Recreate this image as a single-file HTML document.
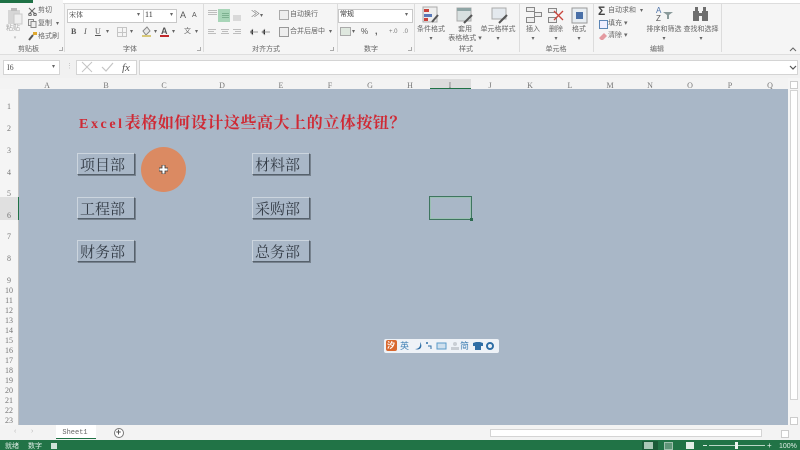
<!DOCTYPE html>
<html lang="zh-CN"><head><meta charset="utf-8">
<style>
html,body{margin:0;padding:0;background:#fff}
#p{position:relative;width:800px;height:450px;overflow:hidden;background:#f4f4f4;font-family:"Liberation Sans","Noto Sans CJK SC",sans-serif;filter:blur(.35px)}
#p div,#p span.a{position:absolute}
.t{font-size:7px;color:#666;white-space:nowrap;line-height:10px}
.c{transform:translateX(-50%);text-align:center}
.h{font-family:"Liberation Serif","Noto Serif CJK SC",serif;font-size:8px;color:#777;line-height:10px;transform:translateX(-50%);white-space:nowrap}
.r{font-family:"Liberation Serif",serif;font-size:8px;color:#777;width:16px;text-align:center;line-height:10px;left:1px}
.b{background:#a9b7c7;border:1px solid;border-color:#ccd5de #56616c #56616c #ccd5de;box-shadow:1px 1px 0 #77828e;font-family:"Noto Serif CJK SC",serif;font-size:15px;line-height:22px;color:#333b45;text-align:left;padding-left:2px;box-sizing:border-box;width:58px;height:22px;white-space:nowrap}
.sep{width:1px;background:#dcdcdc;top:4px;height:48px}
</style></head><body><div id="p">
<!-- ribbon -->
<div style="left:0;top:0;width:800px;height:54px;background:#f5f5f5;border-bottom:1px solid #dedede"></div>
<div style="left:0;top:0;width:33px;height:3px;background:#1e7145"></div>
<div style="left:63px;top:0;width:737px;height:3px;background:#fff;border-bottom:1px solid #ddd"></div>

<!-- clipboard -->
<svg style="position:absolute;left:6px;top:7px" width="18" height="18"><rect x="2" y="3" width="12" height="14" fill="#d6d6d6"/><rect x="5" y="1" width="6" height="3" fill="#bdbdbd"/><rect x="8" y="7" width="8" height="10" fill="#efefef" stroke="#cacaca"/></svg>
<div class="t c" style="left:13px;top:24px;color:#aaa">粘贴</div>
<div class="t c" style="left:15px;top:33px;font-size:5px;color:#bbb">▾</div>
<svg style="position:absolute;left:28px;top:7px" width="9" height="9"><path d="M1 1L7 7M7 1L1 7" stroke="#666" stroke-width="1"/><circle cx="2" cy="7.5" r="1.3" fill="none" stroke="#666"/><circle cx="7" cy="7.5" r="1.3" fill="none" stroke="#666"/></svg>
<div class="t" style="left:38px;top:6px">剪切</div>
<svg style="position:absolute;left:28px;top:19px" width="9" height="9"><rect x="0.5" y="0.5" width="5" height="6" fill="#eee" stroke="#888"/><rect x="3" y="2.5" width="5" height="6" fill="#eee" stroke="#888"/></svg>
<div class="t" style="left:38px;top:19px">复制</div>
<div class="t" style="left:56px;top:19px;font-size:6px">▾</div>
<svg style="position:absolute;left:28px;top:32px" width="9" height="9"><path d="M1 8L5 3" stroke="#555" stroke-width="2"/><rect x="5" y="0" width="4" height="3" fill="#e0a92e"/></svg>
<div class="t" style="left:38px;top:32px">格式刷</div>
<div class="t" style="left:18px;top:45px;font-size:7px">剪贴板</div>

<!-- font -->
<div style="left:67px;top:9px;width:75px;height:12px;background:#fff;border:1px solid #c8c8c8"></div>
<div class="t" style="left:69px;top:10px;color:#333;font-family:'Noto Serif CJK SC',serif">宋体</div>
<div class="t" style="left:137px;top:10px;font-size:6px">▾</div>
<div style="left:143px;top:9px;width:32px;height:12px;background:#fff;border:1px solid #c8c8c8"></div>
<div class="t" style="left:145px;top:10px;color:#333;font-family:'Liberation Serif',serif;font-size:8px">11</div>
<div class="t" style="left:170px;top:10px;font-size:6px">▾</div>
<div class="t" style="left:180px;top:10px;font-size:9px;color:#555">A</div>
<div class="t" style="left:192px;top:11px;font-size:7px;color:#555">A</div>
<div class="t" style="left:71px;top:27px;font-weight:bold;color:#555;font-family:'Liberation Serif',serif;font-size:8px">B</div>
<div class="t" style="left:84px;top:27px;font-style:italic;color:#555;font-family:'Liberation Serif',serif;font-size:8px">I</div>
<div class="t" style="left:95px;top:27px;text-decoration:underline;color:#555;font-family:'Liberation Serif',serif;font-size:8px">U</div>
<div class="t" style="left:106px;top:27px;font-size:6px">▾</div>
<div style="left:117px;top:27px;width:8px;height:8px;border:1px solid #c5c5c5;background:linear-gradient(#c5c5c5,#c5c5c5) 4px 0/1px 8px no-repeat,linear-gradient(#c5c5c5,#c5c5c5) 0 4px/8px 1px no-repeat"></div>
<div class="t" style="left:130px;top:27px;font-size:6px">▾</div>
<svg style="position:absolute;left:141px;top:26px" width="11" height="11"><path d="M2 5L6 1L9 5L5 9Z" fill="#e8e8e8" stroke="#888"/><rect x="1" y="9" width="9" height="2" fill="#d8c878"/></svg>
<div class="t" style="left:154px;top:27px;font-size:6px">▾</div>
<div class="t" style="left:161px;top:26px;font-size:9px;color:#555;font-weight:bold">A</div>
<div style="left:160px;top:35px;width:9px;height:2px;background:#c0292b"></div>
<div class="t" style="left:172px;top:27px;font-size:6px">▾</div>
<div class="t" style="left:184px;top:27px;color:#666">文</div>
<div class="t" style="left:195px;top:27px;font-size:6px">▾</div>
<div class="t" style="left:123px;top:45px">字体</div>
<div class="sep" style="left:64px"></div><div class="sep" style="left:203px"></div><div class="sep" style="left:337px"></div><div class="sep" style="left:414px"></div><div class="sep" style="left:519px"></div><div class="sep" style="left:593px"></div><div class="sep" style="left:721px"></div>
<div style="left:59px;top:47px;width:3px;height:3px;border-right:1px solid #aaa;border-bottom:1px solid #aaa"></div>
<div style="left:197px;top:47px;width:3px;height:3px;border-right:1px solid #aaa;border-bottom:1px solid #aaa"></div>
<div style="left:330px;top:47px;width:3px;height:3px;border-right:1px solid #aaa;border-bottom:1px solid #aaa"></div>
<div style="left:408px;top:47px;width:3px;height:3px;border-right:1px solid #aaa;border-bottom:1px solid #aaa"></div>

<!-- alignment -->
<div style="left:218px;top:9px;width:12px;height:13px;background:#a8d5b8"></div>
<svg style="position:absolute;left:207px;top:9px" width="40" height="30" stroke="#aaa" stroke-width=".8"><path d="M1 1.5H10M1 3.5H10M1 5.5H10"/><path d="M15 4.5H22M15 6.5H22M15 8.5H22" stroke="#6fa583"/><path d="M26 7H34M26 9H34M26 11H34"/><path d="M1 20.5H9M1 22.5H7M1 24.5H9M14 20.5H22M15 22.5H21M14 24.5H22M26 20.5H34M28 22.5H34M26 24.5H34"/></svg>
<div class="t" style="left:251px;top:9px;font-size:9px;color:#777">≫</div>
<div class="t" style="left:260px;top:11px;font-size:6px">▾</div>
<svg style="position:absolute;left:250px;top:27px" width="22" height="10" stroke="#999"><path d="M0 5H8M3 2L0 5L3 8M12 5H20M15 2L12 5L15 8"/></svg>
<div style="left:279px;top:10px;width:8px;height:8px;border:1px solid #aaa;background:#eee"></div>
<div class="t" style="left:290px;top:10px">自动换行</div>
<div style="left:279px;top:27px;width:8px;height:8px;border:1px solid #999;background:#eee"></div>
<div class="t" style="left:290px;top:27px">合并后居中</div>
<div class="t" style="left:329px;top:27px;font-size:6px">▾</div>
<div class="t" style="left:252px;top:45px">对齐方式</div>

<!-- number -->
<div style="left:338px;top:9px;width:73px;height:12px;background:#fff;border:1px solid #c8c8c8"></div>
<div class="t" style="left:340px;top:10px;color:#333">常规</div>
<div class="t" style="left:405px;top:10px;font-size:6px">▾</div>
<div style="left:340px;top:27px;width:9px;height:7px;background:#dfe8df;border:1px solid #aaa"></div>
<div class="t" style="left:352px;top:27px;font-size:6px">▾</div>
<div class="t" style="left:361px;top:27px;font-size:8px;color:#555">%</div>
<div class="t" style="left:375px;top:26px;font-size:9px;color:#555;font-weight:bold">,</div>
<div class="t" style="left:389px;top:27px;font-size:6px;color:#777">+.0</div>
<div class="t" style="left:403px;top:27px;font-size:6px;color:#777">.0</div>
<div class="t" style="left:364px;top:45px">数字</div>

<!-- styles -->
<svg style="position:absolute;left:422px;top:6px" width="18" height="18"><rect x="1" y="1" width="14" height="15" fill="#eee" stroke="#aaa"/><rect x="2" y="3" width="5" height="3" fill="#c9423b"/><rect x="2" y="8" width="8" height="3" fill="#5a79b8"/><rect x="2" y="12" width="4" height="3" fill="#c9423b"/><path d="M10 16L16 9" stroke="#555" stroke-width="2"/></svg>
<svg style="position:absolute;left:456px;top:7px" width="18" height="18"><rect x="1" y="1" width="14" height="13" fill="#d8e0e0" stroke="#aaa"/><rect x="1" y="1" width="14" height="3" fill="#8fa5a5"/><path d="M8 16L16 8" stroke="#555" stroke-width="2"/></svg>
<svg style="position:absolute;left:491px;top:7px" width="18" height="18"><rect x="1" y="1" width="14" height="11" fill="#e4e9ee" stroke="#aaa"/><path d="M8 16L16 8" stroke="#555" stroke-width="2"/></svg>
<div class="t c" style="left:431px;top:25px">条件格式</div>
<div class="t c" style="left:431px;top:34px;font-size:6px">▾</div>
<div class="t c" style="left:465px;top:25px">套用</div>
<div class="t c" style="left:465px;top:34px">表格格式 ▾</div>
<div class="t c" style="left:498px;top:25px">单元格样式</div>
<div class="t c" style="left:498px;top:34px;font-size:6px">▾</div>
<div class="t c" style="left:466px;top:45px">样式</div>

<!-- cells -->
<svg style="position:absolute;left:526px;top:7px" width="16" height="17" fill="#eee" stroke="#888"><rect x=".5" y=".5" width="8" height="4"/><rect x="8.5" y="5.5" width="7" height="4"/><rect x=".5" y="10.5" width="8" height="5"/></svg>
<svg style="position:absolute;left:548px;top:7px" width="18" height="17"><rect x=".5" y="1.5" width="8" height="4" fill="#eee" stroke="#888"/><rect x=".5" y="10.5" width="8" height="5" fill="#eee" stroke="#888"/><path d="M6 4L15 13M15 4L6 13" stroke="#c9453c" stroke-width="1.3"/></svg>
<svg style="position:absolute;left:571px;top:6px" width="18" height="18"><rect x="1" y="2" width="15" height="15" fill="#e9eef2" stroke="#999"/><rect x="5" y="6" width="7" height="7" fill="#4a70a8"/></svg>
<div class="t c" style="left:533px;top:25px">插入</div><div class="t c" style="left:533px;top:34px;font-size:6px">▾</div>
<div class="t c" style="left:556px;top:25px">删除</div><div class="t c" style="left:556px;top:34px;font-size:6px">▾</div>
<div class="t c" style="left:579px;top:25px">格式</div><div class="t c" style="left:579px;top:34px;font-size:6px">▾</div>
<div class="t c" style="left:556px;top:45px">单元格</div>

<!-- editing -->
<div class="t" style="left:598px;top:5px;font-size:12px;color:#444;font-weight:bold;line-height:12px">Σ</div>
<div class="t" style="left:608px;top:6px">自动求和</div><div class="t" style="left:640px;top:6px;font-size:6px">▾</div>
<div style="left:599px;top:20px;width:7px;height:7px;border:1px solid #5b85b5;background:#eef"></div>
<div class="t" style="left:608px;top:19px">填充 ▾</div>
<svg style="position:absolute;left:598px;top:31px" width="10" height="10"><path d="M1 7L6 2L9 5L5 9H3Z" fill="#e49aa0"/></svg>
<div class="t" style="left:608px;top:31px">清除 ▾</div>
<div class="t" style="left:656px;top:7px;font-size:8px;color:#4a70a8;line-height:8px">A</div>
<div class="t" style="left:656px;top:15px;font-size:8px;color:#555;line-height:8px">Z</div>
<svg style="position:absolute;left:663px;top:11px" width="11" height="9"><path d="M0 1H10L6 4V8H4V4Z" fill="#8a9a9a"/></svg>
<svg style="position:absolute;left:692px;top:7px" width="17" height="15" fill="#6e6e6e"><rect x="1" y="4" width="6" height="10"/><rect x="10" y="4" width="6" height="10"/><rect x="3" y="0" width="3" height="5"/><rect x="11" y="0" width="3" height="5"/><rect x="7" y="6" width="3" height="3"/></svg>
<div class="t c" style="left:664px;top:25px">排序和筛选</div><div class="t c" style="left:664px;top:34px;font-size:6px">▾</div>
<div class="t c" style="left:701px;top:25px">查找和选择</div><div class="t c" style="left:701px;top:34px;font-size:6px">▾</div>
<div class="t c" style="left:657px;top:45px">编辑</div>
<svg style="position:absolute;left:789px;top:46px" width="8" height="6"><path d="M1 5L4 2L7 5" fill="none" stroke="#666"/></svg>

<!-- formula bar -->
<div style="left:0;top:55px;width:800px;height:34px;background:#f1f1f1"></div>
<div style="left:3px;top:60px;width:55px;height:13px;background:#fff;border:1px solid #d4d4d4"></div>
<div class="t" style="left:7px;top:63px;font-family:'Liberation Serif',serif;font-size:8px;color:#555">I6</div>
<div class="t" style="left:52px;top:62px;font-size:6px">▾</div>
<div class="t" style="left:66px;top:62px;color:#bbb">⋮</div>
<div style="left:76px;top:60px;width:59px;height:13px;background:#fff;border:1px solid #d4d4d4"></div>
<svg style="position:absolute;left:80px;top:61px" width="56" height="12"><path d="M2 1L12 11M12 1L2 11" stroke="#c4c4c4"/><path d="M22 6L26 10L33 2" fill="none" stroke="#c4c4c4" stroke-width="1.2"/><text x="42" y="10" font-family="Liberation Serif" font-style="italic" font-size="11" fill="#555">fx</text></svg>
<div style="left:139px;top:60px;width:657px;height:13px;background:#fff;border:1px solid #d4d4d4"></div>
<svg style="position:absolute;left:789px;top:65px" width="8" height="6"><path d="M1 1L4 4L7 1" fill="none" stroke="#555" stroke-width="1.2"/></svg>

<!-- headers -->
<div style="left:0;top:78px;width:800px;height:11px;background:#f3f3f3"></div>
<div style="left:0;top:89px;width:18px;height:336px;background:#f5f5f5;border-right:1px solid #c4c4c4"></div>
<div style="left:430px;top:79px;width:41px;height:10px;background:#dcdcdc;border-bottom:1px solid #207245;box-sizing:border-box"></div>
<div style="left:0;top:197px;width:18px;height:23px;background:#e0e0e0;border-right:1px solid #207245"></div>
<div class="h" style="left:47px;top:81px">A</div><div class="h" style="left:106px;top:81px">B</div><div class="h" style="left:164px;top:81px">C</div><div class="h" style="left:222px;top:81px">D</div><div class="h" style="left:281px;top:81px">E</div><div class="h" style="left:330px;top:81px">F</div><div class="h" style="left:370px;top:81px">G</div><div class="h" style="left:410px;top:81px">H</div><div class="h" style="left:450px;top:81px">I</div><div class="h" style="left:490px;top:81px">J</div><div class="h" style="left:530px;top:81px">K</div><div class="h" style="left:570px;top:81px">L</div><div class="h" style="left:610px;top:81px">M</div><div class="h" style="left:650px;top:81px">N</div><div class="h" style="left:690px;top:81px">O</div><div class="h" style="left:730px;top:81px">P</div><div class="h" style="left:770px;top:81px">Q</div>
<div class="r" style="top:102px">1</div><div class="r" style="top:124px">2</div><div class="r" style="top:146px">3</div><div class="r" style="top:168px">4</div><div class="r" style="top:189px">5</div><div class="r" style="top:211px">6</div><div class="r" style="top:232px">7</div><div class="r" style="top:254px">8</div><div class="r" style="top:276px">9</div><div class="r" style="top:286px">10</div><div class="r" style="top:296px">11</div><div class="r" style="top:306px">12</div><div class="r" style="top:316px">13</div><div class="r" style="top:326px">14</div><div class="r" style="top:336px">15</div><div class="r" style="top:346px">16</div><div class="r" style="top:356px">17</div><div class="r" style="top:366px">18</div><div class="r" style="top:376px">19</div><div class="r" style="top:386px">20</div><div class="r" style="top:396px">21</div><div class="r" style="top:406px">22</div><div class="r" style="top:416px">23</div>

<!-- sheet -->
<div style="left:19px;top:89px;width:769px;height:336px;background:#a9b7c7"></div>
<div style="left:79px;top:112px;font-family:'Noto Serif CJK SC',serif;font-weight:bold;font-size:16px;letter-spacing:.55px;line-height:20px;color:#cf2a35;white-space:nowrap"><span style="font-family:'Liberation Serif',serif;font-size:14px;letter-spacing:2.6px">Excel</span>表格如何设计这些高大上的立体按钮？</div>
<div class="b" style="left:77px;top:153px">项目部</div>
<div class="b" style="left:77px;top:197px">工程部</div>
<div class="b" style="left:77px;top:240px">财务部</div>
<div class="b" style="left:252px;top:153px">材料部</div>
<div class="b" style="left:252px;top:197px">采购部</div>
<div class="b" style="left:252px;top:240px">总务部</div>
<div style="left:429px;top:196px;width:43px;height:24px;box-sizing:border-box;border:1.5px solid #3f7560;box-shadow:inset 0 0 0 1px #9ac0b2"></div>
<div style="left:470px;top:218px;width:3px;height:3px;background:#2d6a4f"></div>
<div style="left:141px;top:147px;width:45px;height:45px;border-radius:50%;background:#db8a62"></div>
<svg style="position:absolute;left:159px;top:165px" width="9" height="9"><path d="M3 0H6V3H9V6H6V9H3V6H0V3H3Z" fill="#fff" stroke="#333" stroke-width=".8"/></svg>

<!-- IME toolbar -->
<div style="left:384px;top:339px;width:115px;height:14px;background:#eef2f7;border-radius:2px"></div>
<div style="left:386px;top:340px;width:11px;height:11px;background:#d9682f;border-radius:2px"></div>
<div class="t" style="left:387px;top:341px;color:#fff;font-size:8px;font-weight:bold;line-height:9px">汐</div>
<div class="t" style="left:400px;top:341px;font-size:9px;color:#3f7fb3;line-height:10px">英</div>
<div class="t" style="left:460px;top:341px;font-size:9px;color:#3f7fb3;line-height:10px">简</div>
<svg style="position:absolute;left:413px;top:340px" width="84" height="12"><path d="M2 9C6 9 8 6 7 2C10 6 8 11 2 9Z" fill="#2f6ea5"/><circle cx="14" cy="3" r="1" fill="#2f6ea5"/><path d="M15 6H18V9" fill="none" stroke="#2f6ea5"/><rect x="24" y="3" width="9" height="6" fill="#cfe0ee" stroke="#5a9ac8"/><circle cx="42" cy="4" r="2" fill="#c9ced4"/><rect x="38" y="7" width="8" height="3" fill="#c9ced4"/><path d="M60 3L63 2L67 2L70 3L70 6L68 6V10H62V6L60 6Z" fill="#2f6ea5"/><circle cx="77" cy="6" r="3" fill="none" stroke="#2f6ea5" stroke-width="2"/></svg>

<!-- v scrollbar -->
<div style="left:788px;top:78px;width:12px;height:347px;background:#f5f5f5"></div>
<div style="left:790px;top:81px;width:8px;height:8px;background:#fff;border:1px solid #ccc;box-sizing:border-box"></div>
<div style="left:790px;top:90px;width:8px;height:310px;background:#fff;border:1px solid #d4d4d4;box-sizing:border-box"></div>
<div style="left:790px;top:417px;width:8px;height:8px;background:#fff;border:1px solid #ccc;box-sizing:border-box"></div>

<!-- tabs -->
<div style="left:0;top:425px;width:800px;height:15px;background:#f3f3f3"></div>
<div class="t" style="left:14px;top:427px;color:#bbb">‹</div><div class="t" style="left:31px;top:427px;color:#bbb">›</div>
<div style="left:56px;top:425px;width:40px;height:14px;background:#fff;border-bottom:1.5px solid #207245;box-sizing:border-box"></div>
<div class="t c" style="left:75px;top:428px;font-family:'Liberation Mono',monospace;font-size:7px">Sheet1</div>
<div style="left:114px;top:428px;width:8px;height:8px;border:1px solid #777;border-radius:50%;background:#fff"></div>
<div class="t c" style="left:118.5px;top:427px;font-size:9px;font-weight:bold;color:#555">+</div>
<div style="left:490px;top:429px;width:272px;height:8px;background:#fff;border:1px solid #d4d4d4;box-sizing:border-box"></div>
<div style="left:781px;top:430px;width:8px;height:8px;background:#fff;border:1px solid #ccc;box-sizing:border-box"></div>

<!-- status bar -->
<div style="left:0;top:440px;width:800px;height:10px;background:#217346"></div>
<div class="t" style="left:5px;top:442px;color:#dfeee6;font-size:7px;line-height:9px">就绪</div>
<div class="t" style="left:28px;top:442px;color:#dfeee6;font-size:7px;line-height:9px">数字</div>
<div style="left:51px;top:443px;width:6px;height:6px;background:#cfe3d8"></div>
<div style="left:642px;top:441px;width:16px;height:9px;background:#1a5c38"></div>
<div style="left:644px;top:442px;width:9px;height:7px;background:#a9c8b6"></div>
<div style="left:664px;top:442px;width:7px;height:6px;background:#5f9678;border:1px solid #9fc2ae"></div>
<div style="left:686px;top:442px;width:8px;height:7px;background:#e4efe8"></div>
<div style="left:703px;top:445px;width:4px;height:1px;background:#dfeee6"></div>
<div style="left:709px;top:445px;width:56px;height:1px;background:#bcd6c7"></div>
<div style="left:735px;top:442px;width:3px;height:7px;background:#eef5f1"></div>
<div class="t" style="left:767px;top:441px;color:#eef5f1;font-size:8px;line-height:9px">+</div>
<div class="t" style="left:779px;top:442px;color:#dfeee6;font-size:7px;line-height:9px">100%</div>
</div></body></html>
